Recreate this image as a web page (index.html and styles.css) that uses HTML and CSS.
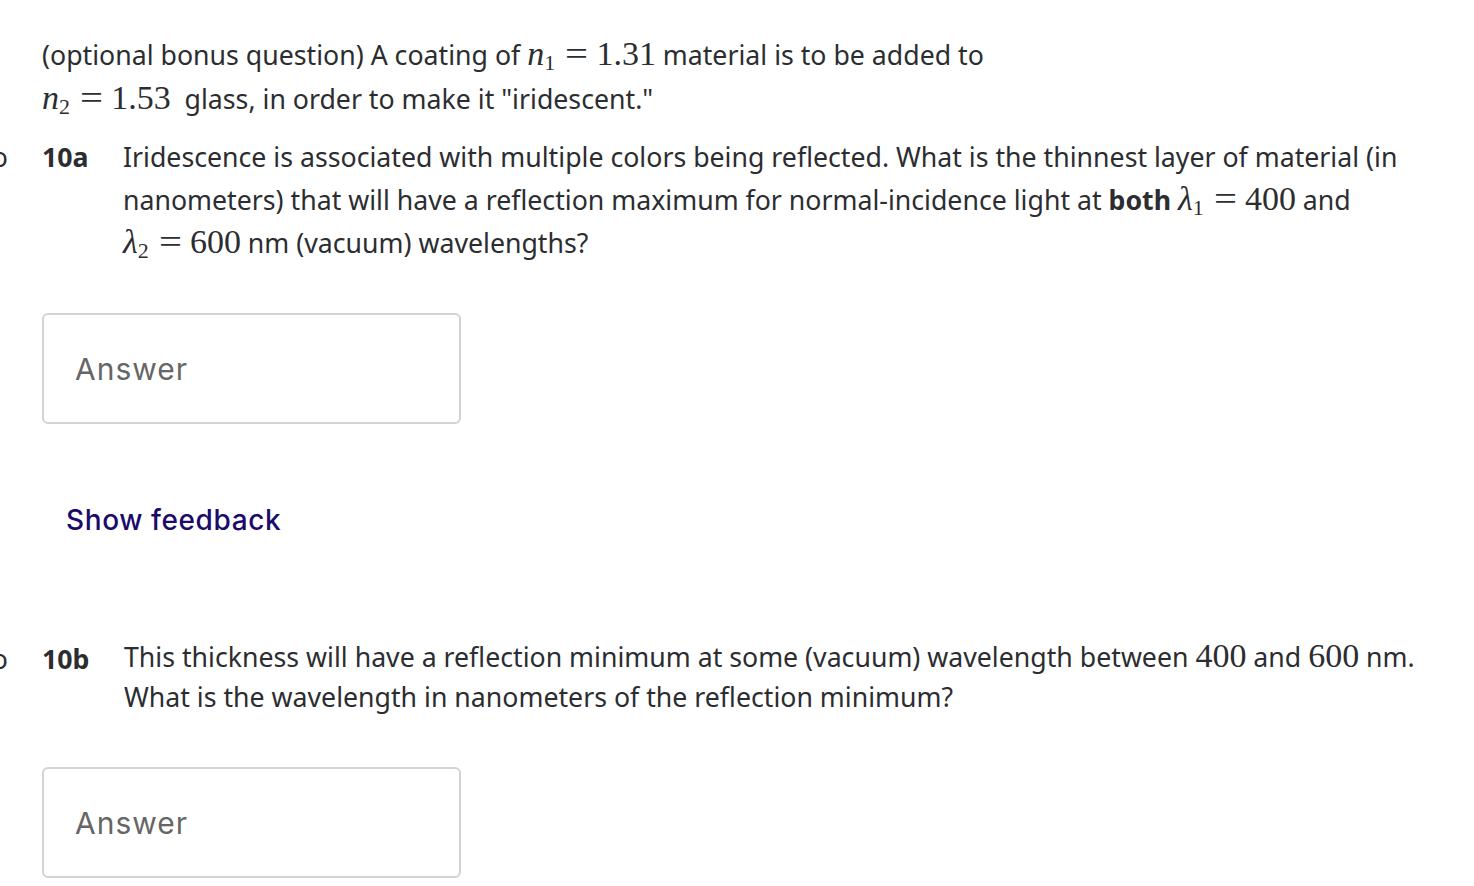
FILE: index.html
```html
<!DOCTYPE html>
<html>
<head>
<meta charset="utf-8">
<link rel="stylesheet" href="styles.css">
</head>
<body>
<main class="page">
  <p class="intro">(optional bonus question) A coating of <span class="m"><i>n</i><sub>1</sub><span class="eq">=</span>1.31</span> material is to be added to<br><span class="m"><i>n</i><sub>2</sub><span class="eq">=</span>1.53</span>&nbsp; glass, in order to make it "iridescent."</p>

  <section class="q q-a">
    <span class="ghost">o</span>
    <span class="num">10a</span>
    <p class="qtext">Iridescence is associated with multiple colors being reflected. What is the thinnest layer of material (in nanometers) that will have a reflection maximum for normal-incidence light at <b>both</b> <span class="m"><i>λ</i><sub>1</sub><span class="eq">=</span>400</span> and <span class="m"><i>λ</i><sub>2</sub><span class="eq">=</span>600</span> nm (vacuum) wavelengths?</p>
  </section>

  <div class="answer a1">Answer</div>

  <a class="feedback">Show feedback</a>

  <section class="q q-b">
    <span class="ghost">o</span>
    <span class="num">10b</span>
    <p class="qtext">This thickness will have a reflection minimum at some (vacuum) wavelength between <span class="m">400</span> and <span class="m">600</span> nm. What is the wavelength in nanometers of the reflection minimum?</p>
  </section>

  <div class="answer a2">Answer</div>
</main>
</body>
</html>
```

FILE: styles.css
```css
html, body {
  margin: 0;
  padding: 0;
  background: #ffffff;
}
body {
  font-family: "Noto Sans", "Open Sans", sans-serif;
  color: #2b2d31;
  font-size: 26.7px;
  overflow: hidden;
}
.page {
  padding: 33px 40px 0 42px;
}
.intro {
  margin: 0;
  line-height: 44px;
}
.m {
  font-family: "Liberation Serif", "DejaVu Serif", serif;
  font-size: 34px;
  line-height: 1;
  white-space: nowrap;
}
.m i {
  font-style: italic;
}
.m sub {
  font-size: 22px;
  font-style: normal;
  vertical-align: -5px;
  line-height: 0;
}
.eq {
  display: inline-block;
  margin: 0 10px 0 12px;
  transform: scaleX(1.2);
}
.q {
  display: flex;
  align-items: flex-start;
}
.q-a {
  margin-top: 14px;
}
.ghost {
  width: 50px;
  margin-left: -84px;
  margin-right: 34px;
  flex: none;
  text-align: right;
  color: #2b2d31;
  line-height: 44px;
}
.num {
  width: 81px;
  flex: none;
  font-weight: 700;
  line-height: 44px;
}
.q-b .num {
  width: 82px;
}
.qtext {
  margin: 0;
  line-height: 43px;
}
.q-b .qtext {
  line-height: 40px;
}
.answer {
  box-sizing: border-box;
  width: 419px;
  height: 111px;
  border: 2px solid #d3d3d3;
  border-radius: 6px;
  padding: 0 0 0 31px;
  display: flex;
  align-items: center;
  font-family: "Inter", "Open Sans", sans-serif;
  font-size: 30px;
  color: #666666;
  letter-spacing: 1px;
}
.a1 {
  margin-top: 49px;
}
.feedback {
  display: block;
  margin: 76px 0 0 24px;
  font-family: "Inter", "Open Sans", sans-serif;
  font-weight: 500;
  font-size: 28px;
  letter-spacing: 0.6px;
  line-height: 40px;
  color: #1b0b6b;
}
.q-b {
  margin-top: 97px;
}
.a2 {
  margin-top: 50px;
}
```
